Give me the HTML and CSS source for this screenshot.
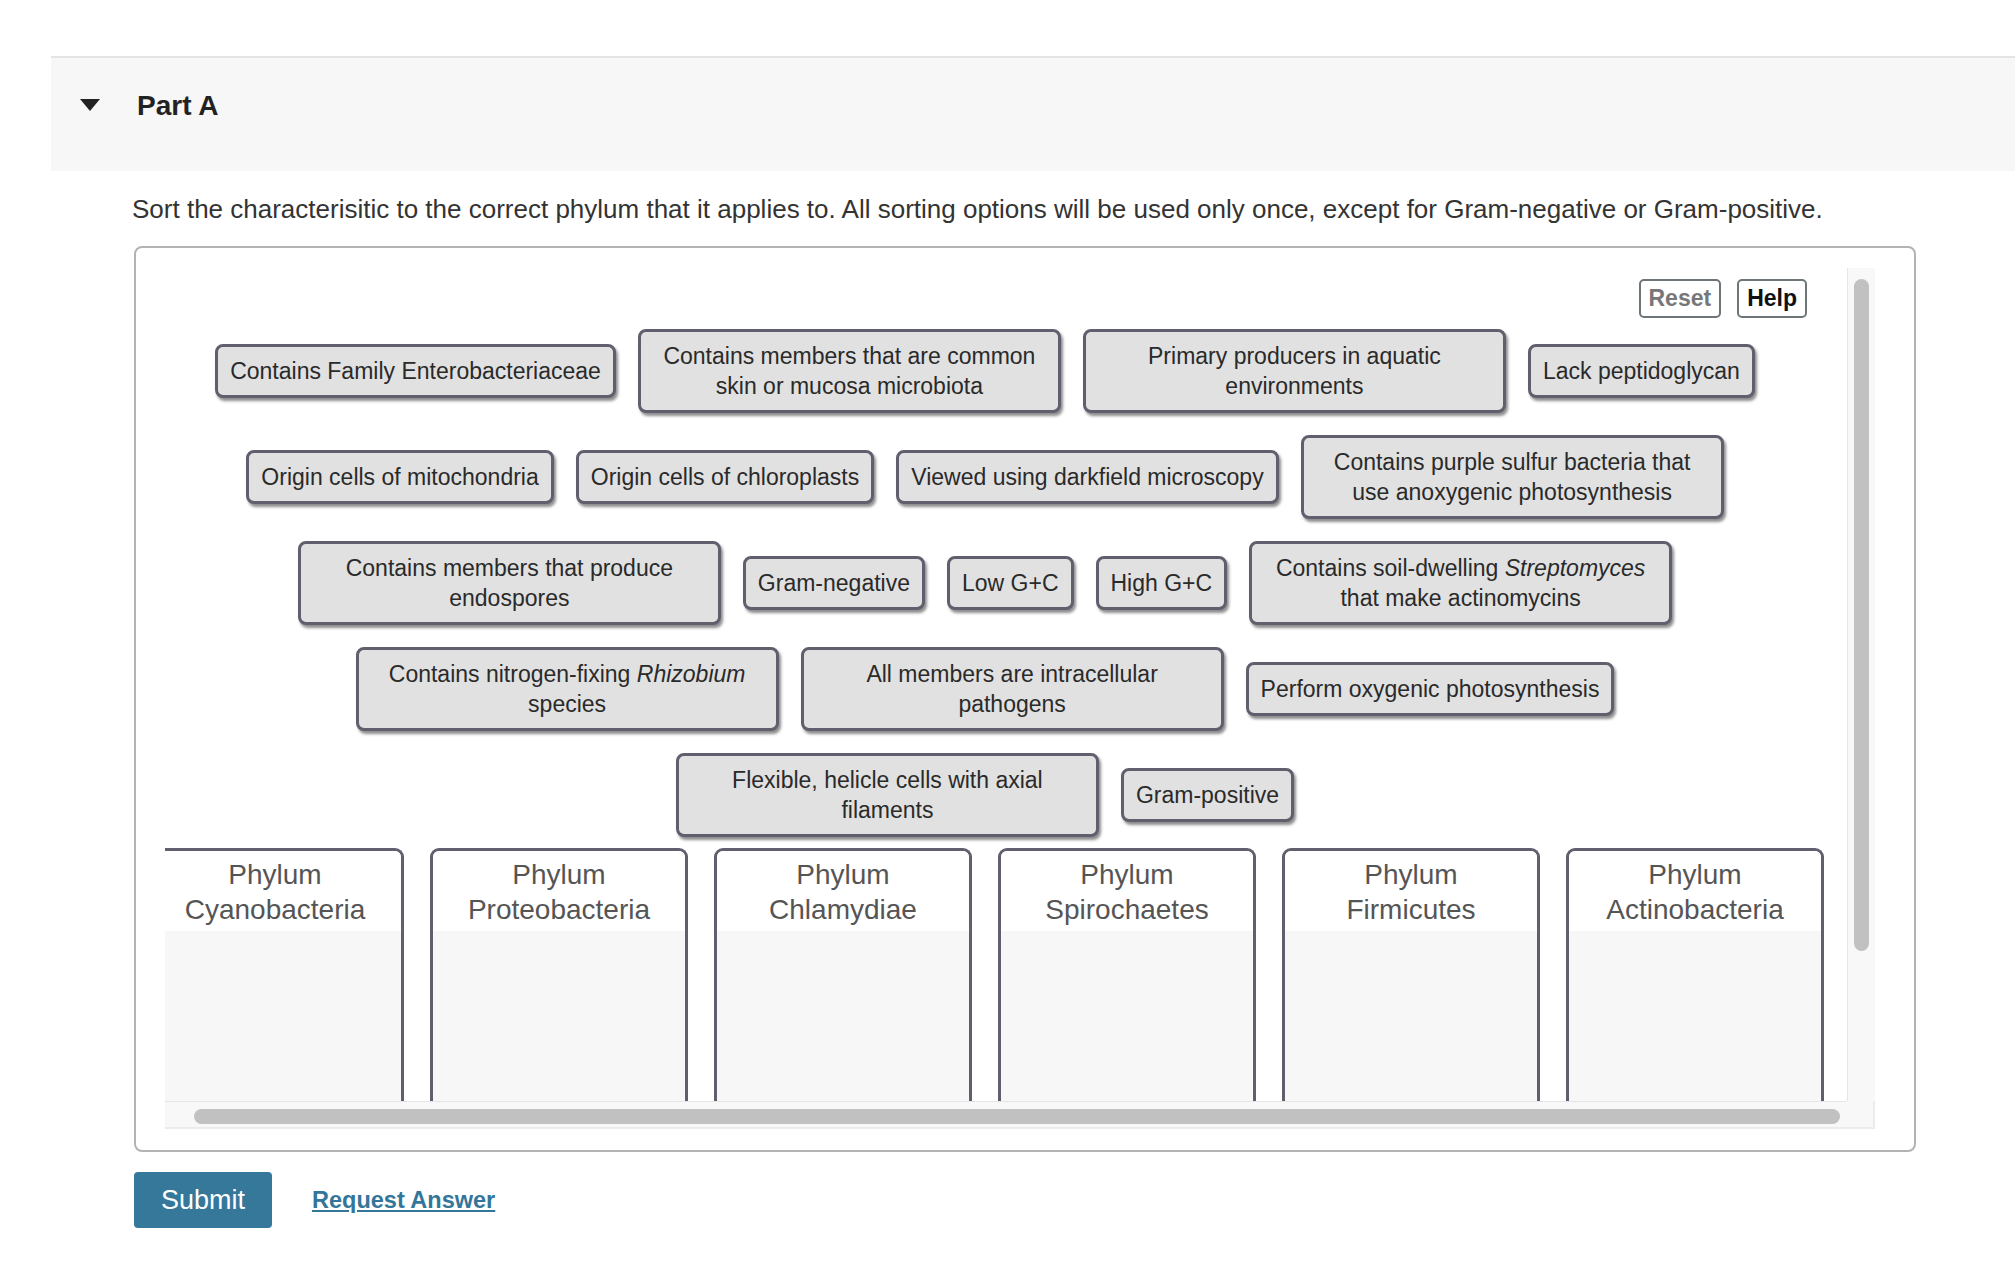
FILE: index.html
```html
<!DOCTYPE html>
<html lang="en">
<head>
  <meta charset="UTF-8" />
  <meta name="viewport" content="width=device-width, initial-scale=1.0"/>
  <title>Part A</title>
  <link rel="stylesheet" href="styles.css">
</head>
<body>

  <div class="part">
    <div class="part-head">
      <span class="caret"></span>
      <h2>Part A</h2>
    </div>

    <div class="part-body">
      <p class="prompt">Sort the characterisitic to the correct phylum that it applies to. All sorting options will be used only once, except for Gram-negative or Gram-positive.</p>

      <div class="dnd">
        <div class="stage">
          <div class="viewport">
            <div class="canvas">
              <div class="tools">
                <button class="tool reset">Reset</button>
                <button class="tool help">Help</button>
              </div>

              <div class="chips">
                <div class="chip-row">
                  <div class="chip">Contains Family Enterobacteriaceae</div>
                  <div class="chip">Contains members that are common skin or mucosa microbiota</div>
                  <div class="chip">Primary producers in aquatic environments</div>
                  <div class="chip">Lack peptidoglycan</div>
                </div>
                <div class="chip-row">
                  <div class="chip">Origin cells of mitochondria</div>
                  <div class="chip">Origin cells of chloroplasts</div>
                  <div class="chip">Viewed using darkfield microscopy</div>
                  <div class="chip">Contains purple sulfur bacteria that use anoxygenic photosynthesis</div>
                </div>
                <div class="chip-row">
                  <div class="chip">Contains members that produce endospores</div>
                  <div class="chip">Gram-negative</div>
                  <div class="chip">Low G+C</div>
                  <div class="chip">High G+C</div>
                  <div class="chip">Contains soil-dwelling <i>Streptomyces</i> that make actinomycins</div>
                </div>
                <div class="chip-row">
                  <div class="chip">Contains nitrogen-fixing <i>Rhizobium</i> species</div>
                  <div class="chip">All members are intracellular pathogens</div>
                  <div class="chip">Perform oxygenic photosynthesis</div>
                </div>
                <div class="chip-row">
                  <div class="chip">Flexible, helicle cells with axial filaments</div>
                  <div class="chip">Gram-positive</div>
                </div>
              </div>

              <div class="bins">
                <div class="bin"><div class="bin-title">Phylum Cyanobacteria</div></div>
                <div class="bin"><div class="bin-title">Phylum Proteobacteria</div></div>
                <div class="bin"><div class="bin-title">Phylum Chlamydiae</div></div>
                <div class="bin"><div class="bin-title">Phylum Spirochaetes</div></div>
                <div class="bin"><div class="bin-title">Phylum Firmicutes</div></div>
                <div class="bin"><div class="bin-title">Phylum Actinobacteria</div></div>
              </div>
            </div>
          </div>
          <div class="vbar"><div class="vthumb"></div></div>
          <div class="hbar"><div class="hthumb"></div></div>
          <div class="corner"></div>
        </div>
      </div>

      <div class="actions">
        <button class="submit">Submit</button>
        <a href="#" class="request">Request Answer</a>
      </div>
    </div>
  </div>

</body>
</html>
```

FILE: styles.css
```css
body {
  font-family: "Liberation Sans", Arial, Helvetica, sans-serif;
  background-color: #fff;
  color: #333;
  margin: 0;
  padding: 56px 0 0 51px;
}

.part {
  border-top: 2px solid #e4e4e4;
}

.part-head {
  display: flex;
  align-items: center;
  height: 96px;
  padding: 0 0 17px 29px;
  background: #f7f7f7;
}

.caret {
  width: 0;
  height: 0;
  border-left: 10px solid transparent;
  border-right: 10px solid transparent;
  border-top: 12px solid #222;
  margin-top: -2px;
}

.part-head h2 {
  margin: 0 0 0 37px;
  font-size: 28px;
  font-weight: bold;
  color: #222;
}

.part-body {
  padding-left: 81px;
}

.prompt {
  margin: 22px 0 21px;
  font-size: 26px;
  line-height: 32px;
  color: #333;
}

.dnd {
  width: 1782px;
  box-sizing: border-box;
  margin-left: 2px;
  border: 2px solid #b3b3b3;
  border-radius: 8px;
  padding: 20px 39px 21px 29px;
}

.stage {
  display: grid;
  grid-template-columns: 1682px 28px;
  grid-template-rows: 833px 28px;
}

.viewport {
  overflow: hidden;
  background: #fff;
}

.canvas {
  width: 1678px;
  margin-left: -19px;
}

.tools {
  display: flex;
  justify-content: flex-end;
  gap: 16px;
  padding: 11px 17px 0 0;
}

.tool {
  height: 39px;
  padding: 0 8px;
  font-family: inherit;
  font-size: 23px;
  font-weight: bold;
  background: #fff;
  border: 2px solid #6d7579;
  border-radius: 5px;
}

.reset {
  color: #777;
}

.help {
  color: #111;
}

.chips {
  display: flex;
  flex-direction: column;
  gap: 22px;
  margin-top: 11px;
}

.chip-row {
  display: flex;
  justify-content: center;
  align-items: center;
  gap: 22px;
  height: 84px;
}

.chip {
  box-sizing: border-box;
  max-width: 423px;
  padding: 9px 12px;
  font-size: 23px;
  line-height: 30px;
  text-align: center;
  color: #2a2a2a;
  background: #e1e1e1;
  border: 3px solid #5f5f6d;
  border-radius: 8px;
  box-shadow: 2px 3px 3px rgba(0, 0, 0, 0.45);
}

.bins {
  display: flex;
  gap: 26px;
  margin-top: 11px;
}

.bin {
  width: 258px;
  height: 300px;
  box-sizing: border-box;
  border: 3px solid #5f5f6d;
  border-bottom: none;
  border-radius: 9px 9px 0 0;
  background: #f7f7f7;
}

.bin-title {
  padding: 6px 16px 4px;
  background: #fff;
  border-radius: 6px 6px 0 0;
  font-size: 28px;
  line-height: 35px;
  text-align: center;
  color: #555;
}

.vbar {
  background: #f8f8f8;
  border-left: 1px solid #e6e6e6;
}

.vthumb {
  width: 15px;
  height: 672px;
  margin: 11px 0 0 6px;
  background: #c1c1c1;
  border-radius: 8px;
}

.hbar {
  background: #f8f8f8;
  border-top: 1px solid #e6e6e6;
  border-bottom: 2px solid #ececec;
}

.hthumb {
  width: 1646px;
  height: 15px;
  margin: 7px 0 0 29px;
  background: #c1c1c1;
  border-radius: 8px;
}

.corner {
  background: #f8f8f8;
  border-bottom: 2px solid #ececec;
  border-right: 2px solid #ececec;
}

.actions {
  display: flex;
  align-items: center;
  margin-top: 20px;
}

.submit {
  width: 138px;
  height: 56px;
  margin-left: 2px;
  font-family: inherit;
  font-size: 27px;
  color: #fff;
  background: #36789a;
  border: none;
  border-radius: 4px;
}

.request {
  margin-left: 40px;
  font-size: 23.5px;
  font-weight: bold;
  color: #34769a;
  text-decoration: underline;
}
```
